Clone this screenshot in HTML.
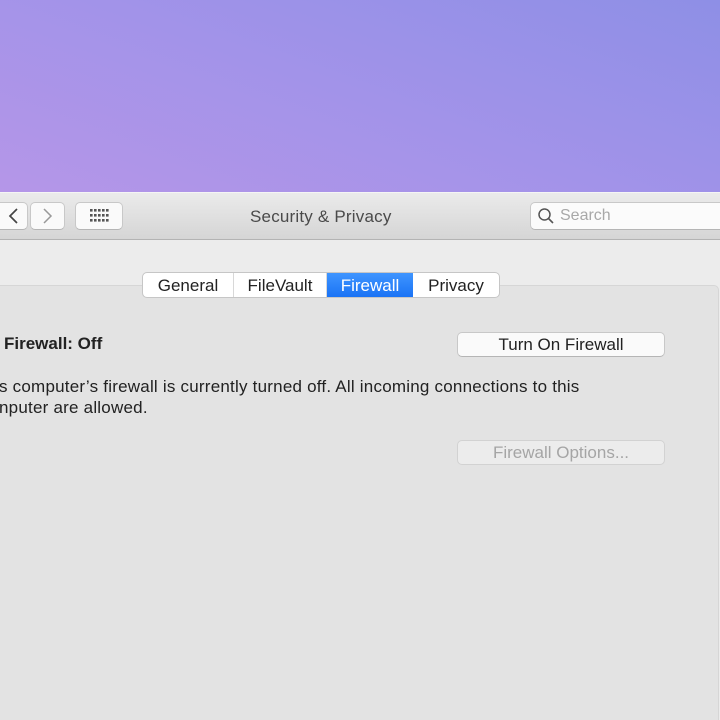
<!DOCTYPE html>
<html><head><style>
html,body{margin:0;width:720px;height:720px;overflow:hidden}
body{font-family:"Liberation Sans",sans-serif;position:relative;background:#e3e3e3}
.bg{position:absolute;left:0;top:0;width:720px;height:192px;background:linear-gradient(200deg,#8e8fe6 0%,#a293e9 50%,#b596e8 100%)}
.tb{position:absolute;left:0;top:192px;width:720px;height:48px;background:linear-gradient(#ebebeb,#d5d5d5);border-top:1px solid #f5f5f5;border-bottom:1px solid #b3b3b3;box-sizing:border-box}
.win{position:absolute;left:0;top:240px;width:720px;height:480px;background:#ececec}
.panel{position:absolute;left:-10px;top:285px;width:727px;height:440px;background:#e3e3e3;border:1px solid #d6d6d6;border-radius:5px}
.btn{position:absolute;background:#fafafa;border:1px solid #c8c8c8;border-bottom-color:#b5b5b5;border-radius:5px;box-sizing:border-box}
.t{position:absolute;white-space:nowrap;color:#222}
.tabs{position:absolute;left:142px;top:272px;height:26px;display:flex;border:1px solid #c6c6c6;border-radius:5px;overflow:hidden;background:#fff;box-sizing:border-box}
.tabs div{font-size:17px;line-height:25px;text-align:center;color:#222;border-right:1px solid #d8d8d8}
</style></head><body>
<div class="bg"></div>
<div class="win"></div>
<div class="tb"></div>
<div class="btn" style="left:-10px;top:202px;width:38px;height:28px"></div>
<div class="btn" style="left:30px;top:202px;width:35px;height:28px"></div>
<svg style="position:absolute;left:0;top:202px" width="70" height="28"><path d="M17 7 L10 14 L17 21" stroke="#444" stroke-width="1.7" fill="none"/><path d="M44 7 L51 14 L44 21" stroke="#999" stroke-width="1.5" fill="none"/></svg>
<div class="btn" style="left:75px;top:202px;width:48px;height:28px"></div>
<svg style="position:absolute;left:90px;top:209px" width="19" height="13" fill="#555"><g><rect x="0" y="0" width="2.6" height="2.6"/><rect x="4" y="0" width="2.6" height="2.6"/><rect x="8" y="0" width="2.6" height="2.6"/><rect x="12" y="0" width="2.6" height="2.6"/><rect x="16" y="0" width="2.6" height="2.6"/><rect x="0" y="5" width="2.6" height="2.6"/><rect x="4" y="5" width="2.6" height="2.6"/><rect x="8" y="5" width="2.6" height="2.6"/><rect x="12" y="5" width="2.6" height="2.6"/><rect x="16" y="5" width="2.6" height="2.6"/><rect x="0" y="10" width="2.6" height="2.6"/><rect x="4" y="10" width="2.6" height="2.6"/><rect x="8" y="10" width="2.6" height="2.6"/><rect x="12" y="10" width="2.6" height="2.6"/><rect x="16" y="10" width="2.6" height="2.6"/></g></svg>
<div class="t" style="left:250px;top:207px;font-size:17px;color:#4a4a4a;letter-spacing:0.2px">Security &amp; Privacy</div>
<div class="btn" style="left:530px;top:202px;width:200px;height:28px;background:#fbfbfb"></div>
<svg style="position:absolute;left:537px;top:207px" width="18" height="18"><circle cx="7.5" cy="7.5" r="5.5" stroke="#555" stroke-width="1.5" fill="none"/><path d="M11.5 11.5 L16 16" stroke="#555" stroke-width="1.6"/></svg>
<div class="t" style="left:560px;top:207px;font-size:16px;color:#a8a8a8">Search</div>
<div class="panel"></div>
<div class="tabs">
<div style="width:90px">General</div>
<div style="width:92px">FileVault</div>
<div style="width:86px;background:linear-gradient(#3f95ff,#1a73f5);color:#fff;border-right:none">Firewall</div>
<div style="width:86px;border-right:none">Privacy</div>
</div>
<div class="t" style="left:4px;top:334px;font-size:17px;font-weight:bold">Firewall: Off</div>
<div class="btn" style="left:457px;top:332px;width:208px;height:25px"></div>
<div class="t" style="left:457px;top:335px;width:208px;text-align:center;font-size:17px">Turn On Firewall</div>
<div class="t" style="left:-1px;top:377px;font-size:17px;letter-spacing:0.22px">s computer’s firewall is currently turned off. All incoming connections to this</div>
<div class="t" style="left:-1px;top:398px;font-size:17px;letter-spacing:0.22px">nputer are allowed.</div>
<div class="btn" style="left:457px;top:440px;width:208px;height:25px;background:#ececec;border-color:#d2d2d2"></div>
<div class="t" style="left:457px;top:443px;width:208px;text-align:center;font-size:17px;color:#a5a5a5">Firewall Options...</div>
</body></html>
